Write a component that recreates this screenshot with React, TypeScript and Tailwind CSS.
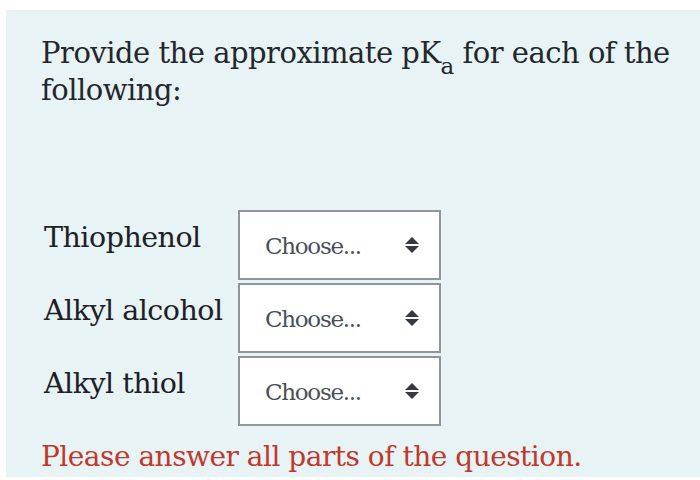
import React from "react";

// ── Sort arrows drawn inside each select ─────────────────────────────────────
const SortArrows: React.FC = () => (
  <svg width="14" height="16" viewBox="0 0 14 16" className="shrink-0">
    <path d="M7 0 L14 7 H0 Z" fill="#343a40" />
    <path d="M0 9 H14 L7 16 Z" fill="#343a40" />
  </svg>
);

const rows = ["Thiophenol", "Alkyl alcohol", "Alkyl thiol"];

const App: React.FC = () => {
  return (
    <div
      className="w-[700px] h-[480px] bg-white pt-[10px] pl-[6px] overflow-hidden"
      style={{ fontFamily: '"DejaVu Serif", "Liberation Serif", serif' }}
    >
      <div className="h-[467px] bg-[#e7f3f5] pl-[35px] pt-[25px]">
        {/* ── Question text ── */}
        <p className="text-[29px] leading-[37px] text-[#23272b] tracking-[-0.5px]">
          Provide the approximate pK<sub className="text-[23px] align-[-5px]">a</sub> for each of the
          <br />
          following:
        </p>

        {/* ── Answer rows ── */}
        <div className="mt-[101px] flex flex-col gap-[3px]">
          {rows.map((label) => (
            <div key={label} className="flex items-start">
              <div className="w-[197px] pt-[11px] pl-[3px] text-[28.5px] leading-[34px] text-[#1d2125] tracking-[-0.5px]">
                {label}
              </div>
              <div className="w-[203px] h-[70px] bg-white border-2 border-[#8f959b] flex items-center pl-[25px] pr-[20px] justify-between">
                <span className="text-[23px] text-[#495057] tracking-[-1.3px] pt-[2px]">Choose...</span>
                <SortArrows />
              </div>
            </div>
          ))}
        </div>

        {/* ── Validation message ── */}
        <p className="mt-[12px] text-[28px] leading-[37px] text-[#c0392b] tracking-[-0.5px]">
          Please answer all parts of the question.
        </p>
      </div>
    </div>
  );
};

export default App;
